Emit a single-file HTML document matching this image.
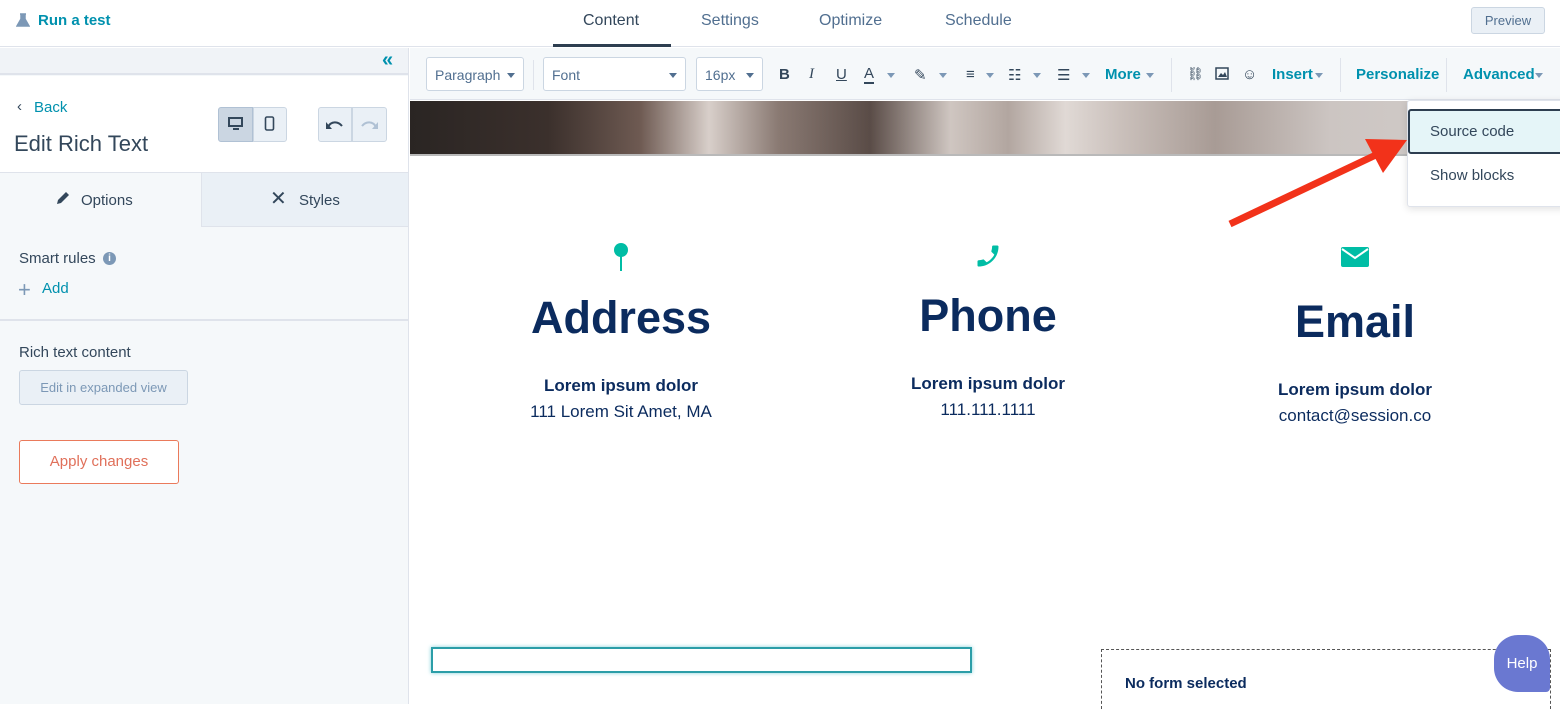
<!DOCTYPE html>
<html><head><meta charset="utf-8"><style>
*{box-sizing:border-box;margin:0;padding:0}
body{width:1560px;height:704px;overflow:hidden;font-family:"Liberation Sans",sans-serif;background:#fff;position:relative;color:#33475b}
.a{position:absolute}
.teal{color:#0091ae}
.sel{position:absolute;top:57px;height:34px;background:#fff;border:1px solid #cbd6e2;border-radius:3px;font-size:14px;color:#516f90;padding:9px 8px}
.sel:after{content:"";position:absolute;right:8px;top:15px;border:4px solid transparent;border-top:5px solid #516f90}
.ti{position:absolute;top:66px;font-size:15px;color:#33475b;font-weight:bold}
.car{position:absolute;top:73px;border:4px solid transparent;border-top:5px solid #7c98b6}
.tb{position:absolute;top:66px;font-size:15px;font-weight:bold;color:#0091ae}
.h{position:absolute;font-weight:bold;color:#0b2b5e;text-align:center;width:360px;font-size:45px}
.s{position:absolute;text-align:center;width:360px;color:#0b2b5e;font-size:17px;line-height:26px}
</style></head><body>
<div class="a" style="left:0;top:0;width:1560px;height:47px;border-bottom:1px solid #dfe3eb;background:#fff"></div>
<svg class="a" style="left:16px;top:13px" width="14" height="14" viewBox="0 0 14 14"><path d="M4 1h6M5 1v5L1 13h12L9 6V1" fill="#7c98b6" stroke="#7c98b6" stroke-width="1.5"/></svg>
<div class="a teal" style="left:38px;top:12px;font-size:15px;font-weight:bold">Run a test</div>
<div class="a" style="left:583px;top:12px;font-size:16px;color:#33475b">Content</div>
<div class="a" style="left:553px;top:44px;width:118px;height:3px;background:#2d3e50"></div>
<div class="a" style="left:701px;top:12px;font-size:16px;color:#516f90">Settings</div>
<div class="a" style="left:819px;top:12px;font-size:16px;color:#516f90">Optimize</div>
<div class="a" style="left:945px;top:12px;font-size:16px;color:#516f90">Schedule</div>
<div class="a" style="left:1471px;top:7px;width:74px;height:27px;background:#eaf0f6;border:1px solid #cbd6e2;border-radius:3px;font-size:13px;color:#516f90;text-align:center;line-height:25px">Preview</div>
<div class="a" style="left:0;top:48px;width:409px;height:656px;background:#f5f8fa;border-right:1px solid #dfe3eb"></div>
<div class="a" style="left:0;top:48px;width:408px;height:27px;background:#f0f3f7;border-bottom:2px solid #dfe3eb"></div>
<div class="a teal" style="left:382px;top:49px;font-size:20px;font-weight:bold">«</div>
<div class="a" style="left:0;top:76px;width:408px;height:97px;background:#fff;border-bottom:1px solid #dfe3eb"></div>
<div class="a" style="left:17px;top:98px;font-size:15px;color:#33475b">‹</div>
<div class="a teal" style="left:34px;top:99px;font-size:15px">Back</div>
<div class="a" style="left:14px;top:131px;font-size:22px;color:#33475b">Edit Rich Text</div>
<div class="a" style="left:218px;top:107px;width:35px;height:35px;background:#cbd6e2;border:1px solid #b0c1d4;border-radius:3px 0 0 3px"></div>
<div class="a" style="left:253px;top:107px;width:34px;height:35px;background:#eaf0f6;border:1px solid #cbd6e2;border-radius:0 3px 3px 0"></div>
<svg class="a" style="left:228px;top:117px" width="16" height="14"><rect x="1" y="1" width="13" height="8" fill="none" stroke="#33475b" stroke-width="2"/><rect x="5" y="11" width="6" height="2" fill="#33475b"/></svg>
<svg class="a" style="left:264px;top:116px" width="12" height="16"><rect x="1.5" y="1" width="8" height="13" rx="1.5" fill="none" stroke="#33475b" stroke-width="1.6"/></svg>
<div class="a" style="left:318px;top:107px;width:34px;height:35px;background:#eaf0f6;border:1px solid #cbd6e2;border-radius:3px 0 0 3px"></div>
<div class="a" style="left:352px;top:107px;width:35px;height:35px;background:#eaf0f6;border:1px solid #cbd6e2;border-radius:0 3px 3px 0"></div>
<svg class="a" style="left:325px;top:118px" width="20" height="14"><path d="M3 9C6 3 13 3 17 8" fill="none" stroke="#33475b" stroke-width="2"/><path d="M1 4v7h6z" fill="#33475b"/></svg>
<svg class="a" style="left:359px;top:118px" width="20" height="14"><path d="M17 9C14 3 7 3 3 8" fill="none" stroke="#b0c1d4" stroke-width="2"/><path d="M19 4v7h-6z" fill="#b0c1d4"/></svg>
<div class="a" style="left:201px;top:173px;width:207px;height:54px;background:#eaf0f6;border-left:1px solid #dfe3eb;border-bottom:1px solid #dfe3eb"></div>
<svg class="a" style="left:55px;top:190px" width="16" height="16"><path d="M2 14l1-4 8-8 3 3-8 8z" fill="#33475b"/></svg>
<div class="a" style="left:81px;top:192px;font-size:15px;color:#33475b">Options</div>
<div class="a" style="left:270px;top:186px;font-size:20px;color:#33475b">✕</div>
<div class="a" style="left:299px;top:192px;font-size:15px;color:#33475b">Styles</div>
<div class="a" style="left:19px;top:250px;font-size:15px;color:#33475b">Smart rules</div>
<div class="a" style="left:103px;top:252px;width:13px;height:13px;border-radius:50%;background:#7c98b6;color:#fff;font-size:10px;font-weight:bold;text-align:center;line-height:13px">i</div>
<div class="a" style="left:18px;top:277px;font-size:22px;color:#7c98b6;font-weight:300">+</div>
<div class="a teal" style="left:42px;top:280px;font-size:15px">Add</div>
<div class="a" style="left:0;top:319px;width:408px;height:2px;background:#dfe3eb"></div>
<div class="a" style="left:19px;top:344px;font-size:15px;color:#33475b">Rich text content</div>
<div class="a" style="left:19px;top:370px;width:169px;height:35px;background:#eaf0f6;border:1px solid #cbd6e2;border-radius:3px;font-size:13px;color:#7c98b6;text-align:center;line-height:33px">Edit in expanded view</div>
<div class="a" style="left:19px;top:440px;width:160px;height:44px;background:#fff;border:1px solid #ea7a5b;border-radius:3px;font-size:15px;color:#e0705a;text-align:center;line-height:42px">Apply changes</div>
<div class="a" style="left:410px;top:48px;width:1150px;height:52px;background:#f5f8fa;border-bottom:1px solid #dfe3eb"></div>
<div class="sel" style="left:426px;width:98px">Paragraph</div>
<div class="a" style="left:533px;top:60px;width:1px;height:30px;background:#dfe3eb"></div>
<div class="sel" style="left:543px;width:143px">Font</div>
<div class="sel" style="left:696px;width:67px">16px</div>
<div class="ti" style="left:779px">B</div>
<div class="ti" style="left:809px;font-style:italic;font-weight:normal;font-family:'Liberation Serif',serif">I</div>
<div class="ti" style="left:836px;font-weight:normal;text-decoration:underline">U</div>
<div class="ti" style="left:864px;font-weight:normal;border-bottom:2px solid #33475b;line-height:16px">A</div>
<div class="car" style="left:887px"></div>
<div class="ti" style="left:914px;font-weight:normal">✎</div><div class="car" style="left:939px"></div>
<div class="ti" style="left:966px;font-weight:normal">≡</div><div class="car" style="left:986px"></div>
<div class="ti" style="left:1008px;font-weight:normal">☷</div><div class="car" style="left:1033px"></div>
<div class="ti" style="left:1057px;font-weight:normal">☰</div><div class="car" style="left:1082px"></div>
<div class="tb" style="left:1105px">More</div><div class="car" style="left:1146px"></div>
<div class="a" style="left:1171px;top:58px;width:1px;height:34px;background:#dfe3eb"></div>
<div class="ti" style="left:1187px;font-weight:normal;font-size:13px">⛓</div>
<svg class="a" style="left:1215px;top:67px" width="14" height="13"><rect x="1" y="1" width="12" height="11" fill="none" stroke="#33475b" stroke-width="1.5"/><path d="M3 10l3-4 2 2 2-3 2 5z" fill="#33475b"/></svg>
<div class="ti" style="left:1242px;font-weight:normal">☺</div>
<div class="tb" style="left:1272px">Insert</div><div class="car" style="left:1315px"></div>
<div class="a" style="left:1340px;top:58px;width:1px;height:34px;background:#dfe3eb"></div>
<div class="tb" style="left:1356px">Personalize</div>
<div class="a" style="left:1446px;top:58px;width:1px;height:34px;background:#dfe3eb"></div>
<div class="tb" style="left:1463px">Advanced</div><div class="car" style="left:1535px"></div>
<div class="a" style="left:410px;top:101px;width:1150px;height:55px;background:linear-gradient(90deg,#2a2523 0%,#3b302c 12%,#6e5a52 20%,#d8cfca 26%,#8a7a73 32%,#5a4c47 40%,#cfc6c1 47%,#b2a6a0 52%,#e0d9d5 57%,#c9bfba 62%,#a89b95 70%,#ccc5c2 80%,#d3cfcd 100%);border-bottom:2px solid #b9b9b9"></div>
<svg class="a" style="left:613px;top:243px" width="16" height="30"><circle cx="8" cy="7" r="7" fill="#00bda5"/><rect x="7" y="12" width="2" height="16" fill="#00bda5"/></svg>
<svg class="a" style="left:974px;top:242px" width="28" height="28" viewBox="0 0 24 24"><g transform="translate(24,0) scale(-1,1)"><path d="M6.6 10.8c1.4 2.8 3.8 5.1 6.6 6.6l2.2-2.2c.3-.3.7-.4 1-.2 1.1.4 2.3.6 3.6.6.6 0 1 .4 1 1V20c0 .6-.4 1-1 1C10.6 21 3 13.4 3 4c0-.6.4-1 1-1h3.5c.6 0 1 .4 1 1 0 1.3.2 2.5.6 3.6.1.3 0 .7-.2 1z" fill="#00bda5"/></g></svg>
<svg class="a" style="left:1341px;top:247px" width="28" height="20"><rect x="0" y="0" width="28" height="20" rx="2" fill="#00bda5"/><path d="M1 2l13 9 13-9" fill="none" stroke="#fff" stroke-width="2"/></svg>
<div class="h" style="left:441px;top:292px">Address</div>
<div class="h" style="left:808px;top:290px">Phone</div>
<div class="h" style="left:1175px;top:296px">Email</div>
<div class="s" style="left:441px;top:373px"><b>Lorem ipsum dolor</b><br>111 Lorem Sit Amet, MA</div>
<div class="s" style="left:808px;top:371px"><b>Lorem ipsum dolor</b><br>111.111.1111</div>
<div class="s" style="left:1175px;top:377px"><b>Lorem ipsum dolor</b><br>contact@session.co</div>
<div class="a" style="left:431px;top:647px;width:541px;height:26px;border:2px solid #2b9ea8;box-shadow:0 0 4px #7fd0d8"></div>
<div class="a" style="left:1101px;top:649px;width:450px;height:60px;border:1px dashed #555;border-bottom:none"></div>
<div class="a" style="left:1125px;top:675px;font-size:15px;font-weight:bold;color:#0b2b5e">No form selected</div>
<div class="a" style="left:1494px;top:635px;width:56px;height:57px;background:#6a78d1;border-radius:24px 24px 4px 24px;color:#fff;font-size:15px;text-align:center;line-height:57px">Help</div>
<div class="a" style="left:1407px;top:100px;width:160px;height:107px;background:#fff;border:1px solid #dfe3eb;border-radius:3px;box-shadow:0 2px 8px rgba(0,0,0,.12)"></div>
<div class="a" style="left:1408px;top:109px;width:160px;height:45px;background:#e5f5f8;border:2px solid #2d3e50;border-radius:3px"></div>
<div class="a" style="left:1430px;top:123px;font-size:15px;color:#33475b">Source code</div>
<div class="a" style="left:1430px;top:167px;font-size:15px;color:#33475b">Show blocks</div>
<svg class="a" style="left:1220px;top:130px" width="200" height="110"><line x1="10" y1="94" x2="160" y2="23" stroke="#f2321a" stroke-width="7"/><path d="M187 10L145 9 163 43z" fill="#f2321a"/></svg>
</body></html>
